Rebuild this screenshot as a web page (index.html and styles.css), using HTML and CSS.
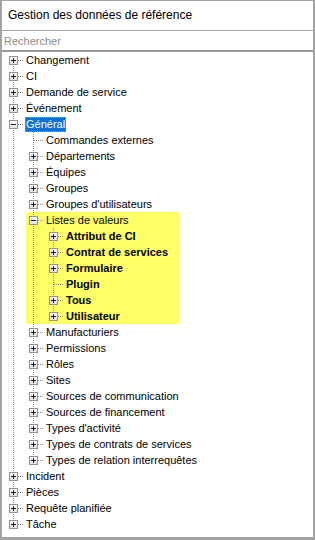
FILE: index.html
```html
<!DOCTYPE html>
<html lang="fr">
<head>
  <meta charset="UTF-8">
  <title>Gestion des données de référence</title>
  <link rel="stylesheet" href="styles.css">
</head>
<body>

<div class="panel">
  <div class="title">Gestion des données de référence</div>
  <div class="search">
    <input type="text" placeholder="Rechercher">
  </div>

  <ul class="tree">
    <li><div class="row"><span class="gut"><i class="exp"></i></span><span class="lbl">Changement</span></div></li>
    <li><div class="row"><span class="gut"><i class="exp"></i></span><span class="lbl">CI</span></div></li>
    <li><div class="row"><span class="gut"><i class="exp"></i></span><span class="lbl">Demande de service</span></div></li>
    <li><div class="row"><span class="gut"><i class="exp"></i></span><span class="lbl">Événement</span></div></li>
    <li>
      <div class="row"><span class="gut"><i class="exp open"></i></span><span class="lbl sel">Général</span></div>
      <ul>
        <li><div class="row"><span class="gut"></span><span class="lbl">Commandes externes</span></div></li>
        <li><div class="row"><span class="gut"><i class="exp"></i></span><span class="lbl">Départements</span></div></li>
        <li><div class="row"><span class="gut"><i class="exp"></i></span><span class="lbl">Équipes</span></div></li>
        <li><div class="row"><span class="gut"><i class="exp"></i></span><span class="lbl">Groupes</span></div></li>
        <li><div class="row"><span class="gut"><i class="exp"></i></span><span class="lbl">Groupes d'utilisateurs</span></div></li>
        <li class="hl">
          <div class="row"><span class="gut"><i class="exp open"></i></span><span class="lbl">Listes de valeurs</span></div>
          <ul class="strong">
            <li><div class="row"><span class="gut"><i class="exp"></i></span><span class="lbl">Attribut de CI</span></div></li>
            <li><div class="row"><span class="gut"><i class="exp"></i></span><span class="lbl">Contrat de services</span></div></li>
            <li><div class="row"><span class="gut"><i class="exp"></i></span><span class="lbl">Formulaire</span></div></li>
            <li><div class="row"><span class="gut"></span><span class="lbl">Plugin</span></div></li>
            <li><div class="row"><span class="gut"><i class="exp"></i></span><span class="lbl">Tous</span></div></li>
            <li><div class="row"><span class="gut"><i class="exp"></i></span><span class="lbl">Utilisateur</span></div></li>
          </ul>
        </li>
        <li><div class="row"><span class="gut"><i class="exp"></i></span><span class="lbl">Manufacturiers</span></div></li>
        <li><div class="row"><span class="gut"><i class="exp"></i></span><span class="lbl">Permissions</span></div></li>
        <li><div class="row"><span class="gut"><i class="exp"></i></span><span class="lbl">Rôles</span></div></li>
        <li><div class="row"><span class="gut"><i class="exp"></i></span><span class="lbl">Sites</span></div></li>
        <li><div class="row"><span class="gut"><i class="exp"></i></span><span class="lbl">Sources de communication</span></div></li>
        <li><div class="row"><span class="gut"><i class="exp"></i></span><span class="lbl">Sources de financement</span></div></li>
        <li><div class="row"><span class="gut"><i class="exp"></i></span><span class="lbl">Types d'activité</span></div></li>
        <li><div class="row"><span class="gut"><i class="exp"></i></span><span class="lbl">Types de contrats de services</span></div></li>
        <li><div class="row"><span class="gut"><i class="exp"></i></span><span class="lbl">Types de relation interrequêtes</span></div></li>
      </ul>
    </li>
    <li><div class="row"><span class="gut"><i class="exp"></i></span><span class="lbl">Incident</span></div></li>
    <li><div class="row"><span class="gut"><i class="exp"></i></span><span class="lbl">Pièces</span></div></li>
    <li><div class="row"><span class="gut"><i class="exp"></i></span><span class="lbl">Requête planifiée</span></div></li>
    <li><div class="row"><span class="gut"><i class="exp"></i></span><span class="lbl">Tâche</span></div></li>
  </ul>
</div>

</body>
</html>
```

FILE: styles.css
```css
html, body {
  margin: 0;
  padding: 0;
  background: #fff;
}
body {
  font-family: "Liberation Sans", Arial, sans-serif;
  font-size: 11px;
  color: #000;
}
.panel {
  width: 315px;
  height: 540px;
  box-sizing: border-box;
  border: 2px solid #a3a3a3;
  border-top-width: 1px;
  border-bottom-width: 3px;
  background: #fff;
  overflow: hidden;
}
.title {
  height: 29px;
  line-height: 29px;
  padding-left: 6px;
  font-size: 12px;
  border-bottom: 1px solid #a8a8a8;
}
.search {
  height: 19px;
  border-bottom: 2px solid #9b9b9b;
}
.search input {
  border: none;
  outline: none;
  width: 100%;
  height: 19px;
  padding: 0 2px;
  box-sizing: border-box;
  font-family: inherit;
  font-size: 11px;
}
.search input::placeholder {
  color: #8c8c8c;
}

/* tree */
.tree, .tree ul {
  list-style: none;
  margin: 0;
  padding: 0;
}
.tree {
  padding-left: 2px;
}
.tree ul {
  padding-left: 20px;
}
.tree li {
  background: repeating-linear-gradient(to bottom, #8d8d8d 0 1px, transparent 1px 2px) 9px 0 / 1px 100% no-repeat;
}
.tree li:last-child {
  background-size: 1px 8px;
}
.tree > li:first-child {
  background-position: 9px 8px;
}
.tree li.hl {
  background:
    repeating-linear-gradient(to bottom, #8d8d8d 0 1px, transparent 1px 2px) 9px 0 / 1px 100% no-repeat,
    linear-gradient(#ffff66, #ffff66) 2px 0 / 153px 100% no-repeat;
}
.strong .lbl {
  font-weight: bold;
}
.row {
  display: flex;
  align-items: center;
  height: 16px;
}
.gut {
  flex: none;
  width: 20px;
  height: 16px;
  display: flex;
  align-items: center;
  background: repeating-linear-gradient(to right, #8d8d8d 0 1px, transparent 1px 2px) 10px 8px / 10px 1px no-repeat;
}
.exp {
  display: block;
  width: 7px;
  height: 7px;
  margin-left: 5px;
  border: 1px solid #939393;
  background:
    linear-gradient(#1a1a1a, #1a1a1a) center / 5px 1px no-repeat,
    linear-gradient(#1a1a1a, #1a1a1a) center / 1px 5px no-repeat,
    linear-gradient(#fff, #e2e2e2);
}
.exp.open {
  background:
    linear-gradient(#1a1a1a, #1a1a1a) center / 5px 1px no-repeat,
    linear-gradient(#fff, #e2e2e2);
}
.lbl {
  margin-left: 1px;
  padding: 0 1px;
  height: 15px;
  line-height: 15px;
  white-space: nowrap;
}
.lbl.sel {
  background: #0a74d6;
  color: #fff;
  outline: 1px dotted #f08c1a;
  outline-offset: -1px;
}
```
